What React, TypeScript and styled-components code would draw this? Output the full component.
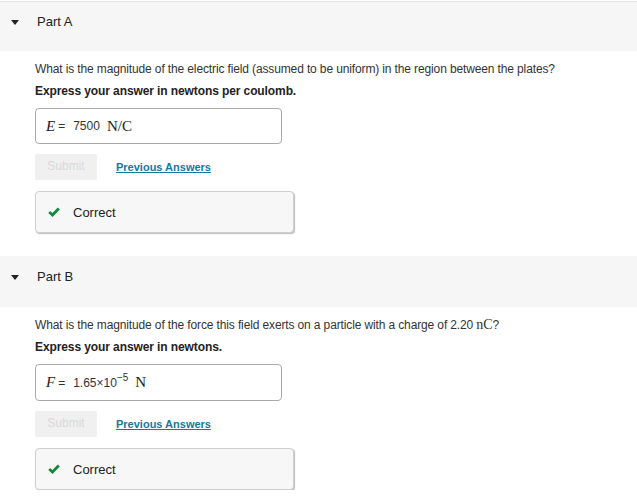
import React from "react";
import styled, { createGlobalStyle } from "styled-components";

const Global = createGlobalStyle`
  html, body { margin: 0; padding: 0; background: #fff; }
  body { font-family: "Liberation Sans", Arial, sans-serif; color: #333; }
`;

const Page = styled.div`
  padding-top: 1px;
  width: 637px;
`;

const Section = styled.section<{ $gapTop?: boolean }>`
  margin-top: ${(p) => (p.$gapTop ? "23px" : "0")};
`;

const Header = styled.div<{ $border?: boolean }>`
  height: ${(p) => (p.$border ? "50px" : "51px")};
  box-sizing: border-box;
  background: #f6f6f6;
  border-top: ${(p) => (p.$border ? "1px solid #e3e3e3" : "none")};
  display: flex;
  align-items: flex-start;
  padding: ${(p) => (p.$border ? "12px" : "13px")} 0 0 11px;
`;

const Caret = styled.span`
  width: 0;
  height: 0;
  border-left: 4px solid transparent;
  border-right: 4px solid transparent;
  border-top: 5px solid #222;
  margin-top: 6px;
`;

const Title = styled.span`
  font-size: 13px;
  line-height: 16px;
  color: #222;
  margin-left: 18px;
`;

const Body = styled.div`
  padding: 10px 0 0 35px;
  display: flex;
  flex-direction: column;
  align-items: flex-start;
`;

const Question = styled.p`
  margin: 0;
  font-size: 12px;
  line-height: 16px;
  letter-spacing: -0.13px;
  color: #333;
`;

const Instruction = styled.p`
  margin: 6px 0 0;
  font-size: 12px;
  line-height: 16px;
  font-weight: bold;
  letter-spacing: -0.1px;
  color: #222;
`;

const AnswerBox = styled.div<{ $h: number }>`
  margin-top: 9px;
  width: 247px;
  height: ${(p) => p.$h}px;
  box-sizing: border-box;
  border: 1px solid #aaa;
  border-radius: 4px;
  display: flex;
  align-items: center;
  padding-left: 10px;
  background: #fff;
`;

const MathVar = styled.span`
  font-family: "Liberation Serif", "Times New Roman", serif;
  font-style: italic;
  font-size: 15px;
  color: #222;
`;

const Eq = styled.span`
  font-size: 12px;
  color: #333;
  margin: 0 8px 0 3px;
`;

const Value = styled.span`
  font-size: 12px;
  color: #333;
`;

const Unit = styled.span`
  font-family: "Liberation Serif", "Times New Roman", serif;
  font-size: 15px;
  color: #222;
  margin-left: 7px;
`;

const Sup = styled.sup`
  font-size: 10px;
  vertical-align: 6px;
  line-height: 0;
`;

const SerifInline = styled.span`
  font-family: "Liberation Serif", "Times New Roman", serif;
  font-size: 14px;
`;

const Actions = styled.div`
  margin-top: 10px;
  display: flex;
  align-items: center;
`;

const SubmitButton = styled.button`
  width: 62px;
  height: 26px;
  border: none;
  border-radius: 2px;
  background: #f0f0f0;
  color: #d9d9d9;
  font-family: "Liberation Sans", Arial, sans-serif;
  font-size: 12px;
  padding: 0 0 2px;
`;

const PrevLink = styled.a`
  margin-left: 19px;
  font-size: 11px;
  font-weight: bold;
  color: #14799f;
  text-decoration: underline;
  cursor: pointer;
`;

const Feedback = styled.div`
  margin-top: 11px;
  width: 259px;
  height: 42px;
  box-sizing: border-box;
  background: #f7f7f7;
  border: 1px solid #cfcfcf;
  border-radius: 4px;
  box-shadow: 1px 1px 1px #bdbdbd;
  display: flex;
  align-items: center;
  padding-left: 12px;
  gap: 13px;
`;

const FeedbackText = styled.span`
  font-size: 13px;
  color: #222;
`;

const Check = () => (
  <svg width="12" height="10" viewBox="0 0 12 10">
    <path d="M1.2 5 L4.5 8 L10.8 1.5" fill="none" stroke="#118a3a" strokeWidth="2.8" />
  </svg>
);

type PartProps = {
  title: string;
  first?: boolean;
  question: React.ReactNode;
  instruction: string;
  boxHeight: number;
  answer: React.ReactNode;
};

const Part = ({ title, first, question, instruction, boxHeight, answer }: PartProps) => (
  <Section $gapTop={!first}>
    <Header $border={first}>
      <Caret />
      <Title>{title}</Title>
    </Header>
    <Body>
      <Question>{question}</Question>
      <Instruction>{instruction}</Instruction>
      <AnswerBox $h={boxHeight}>{answer}</AnswerBox>
      <Actions>
        <SubmitButton disabled>Submit</SubmitButton>
        <PrevLink>Previous Answers</PrevLink>
      </Actions>
      <Feedback>
        <Check />
        <FeedbackText>Correct</FeedbackText>
      </Feedback>
    </Body>
  </Section>
);

export default function App() {
  return (
    <>
      <Global />
      <Page>
        <Part
          first
          title="Part A"
          question="What is the magnitude of the electric field (assumed to be uniform) in the region between the plates?"
          instruction="Express your answer in newtons per coulomb."
          boxHeight={36}
          answer={
            <>
              <MathVar>E</MathVar>
              <Eq>=</Eq>
              <Value>7500</Value>
              <Unit>N/C</Unit>
            </>
          }
        />
        <Part
          title="Part B"
          question={
            <>
              What is the magnitude of the force this field exerts on a particle with a charge of 2.20{" "}
              <SerifInline>nC</SerifInline>?
            </>
          }
          instruction="Express your answer in newtons."
          boxHeight={37}
          answer={
            <>
              <MathVar>F</MathVar>
              <Eq>=</Eq>
              <Value>
                1.65×10<Sup>−5</Sup>
              </Value>
              <Unit>N</Unit>
            </>
          }
        />
      </Page>
    </>
  );
}
